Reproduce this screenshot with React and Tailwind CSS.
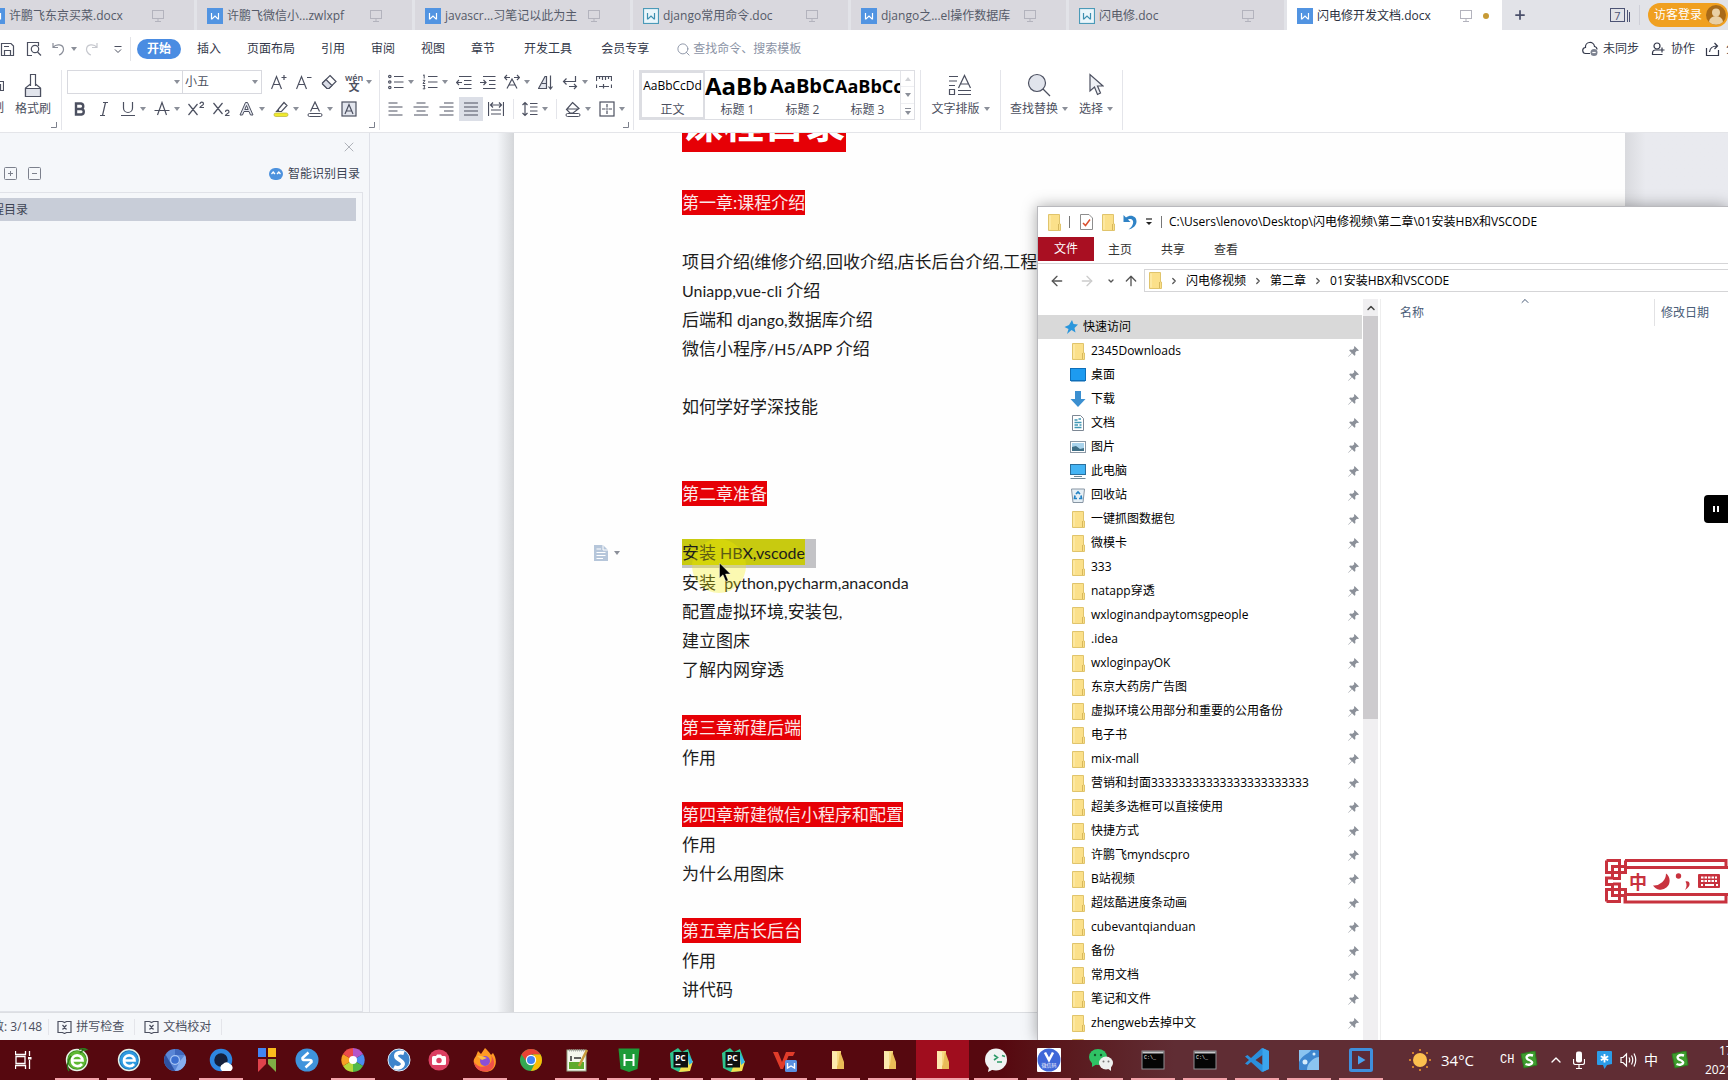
import React from "react";
import { Search, ArrowLeft, ArrowRight, ArrowUp, ChevronDown, ChevronUp, ChevronRight, Plus, X } from "lucide-react";

const UI = "font-['Open_Sans','Noto_Sans_CJK_SC',sans-serif]";

/* ---------- small shared drawings ---------- */

function Svg({ w = 16, h = 16, children, className = "", sw = 1.2 }) {
  return (
    <svg width={w} height={h} viewBox={`0 0 ${w} ${h}`} fill="none" stroke="currentColor"
      strokeWidth={sw} className={`shrink-0 ${className}`} aria-hidden="true">
      {children}
    </svg>
  );
}

function Caret({ className = "" }) {
  return (
    <svg width="6" height="4" viewBox="0 0 6 4" className={`shrink-0 ${className}`} aria-hidden="true">
      <path d="M0 0H6L3 4Z" fill="#8b8f99" />
    </svg>
  );
}

function DocIcon({ outline }) {
  return (
    <Svg className="text-[#4a86d8]">
      <rect x="0.5" y="0.5" width="15" height="15" fill={outline ? "#eaf6fb" : "#5294e2"} stroke={outline ? "#4b9ab8" : "#5294e2"} />
      <path d="M4.500 5V11H5L8 8L11 11H11.500V5" stroke={outline ? "#3c8fb0" : "#fff"} strokeWidth="1.2" />
    </Svg>
  );
}

function Monitor() {
  return (
    <Svg w={12} h={12} sw={1} className="text-[#b3b3bd]">
      <rect x="0.5" y="0.5" width="11" height="8" />
      <path d="M6 8.5V11M3 11.5H9" />
    </Svg>
  );
}

function Folder({ w = 13, h = 17 }) {
  return (
    <svg width={w} height={h} viewBox="0 0 13 17" className="shrink-0" aria-hidden="true">
      <path d="M0.5 0.5H11.5V10H12.5V16.5H0.5Z" fill="#fbe08a" stroke="#e0c46c" />
      <path d="M10.500 10V16" stroke="#d6b75c" />
      <path d="M2 1.500V15.500" stroke="#fff0b8" />
    </svg>
  );
}

/* ---------- title tabs ---------- */

const tabs = [
  { name: "许鹏飞东京买菜.docx" },
  { name: "许鹏飞微信小...zwlxpf" },
  { name: "javascr...习笔记以此为主" },
  { name: "django常用命令.doc", outline: true },
  { name: "django之...el操作数据库" },
  { name: "闪电修.doc", outline: true },
  { name: "闪电修开发文档.docx", active: true },
];

function TabBar() {
  return (
    <header className="flex h-[30px] shrink-0 items-center bg-[#e2e3e8] text-xs">
      <div className="-ml-[21px] flex h-full gap-[3px]">
        {tabs.map((t) => (
          <button key={t.name}
            className={`flex h-full w-[215px] shrink-0 items-center pt-px pl-2.5 ${t.active ? "bg-white text-[#2b3040]" : "bg-[#d9d8de] text-[#555a68]"}`}>
            <DocIcon outline={t.outline} />
            <span className="ml-1 w-[143px] whitespace-nowrap text-left leading-5">{t.name}</span>
            <Monitor />
            {t.active && <span className="ml-[11px] size-1.5 rounded-full bg-[#c79a35]" />}
          </button>
        ))}
      </div>
      <button className="ml-[11px] text-[#4a4f6a]" aria-label="新建标签"><Plus size={14} strokeWidth={3} /></button>
      <div className="flex-1" />
      <button className="mr-[9px] flex items-center text-[#4c5374]" aria-label="窗口列表">
        <span className="flex h-[14px] w-[15px] items-center justify-center border border-current text-[11px] leading-none">7</span>
        <span className="ml-0.5 h-3 w-px self-end bg-current" />
        <span className="ml-px h-2.5 w-px self-end bg-current" />
      </button>
      <span className="h-5 w-px bg-[#cfd0d8]" />
      <button className="ml-2 flex h-6 items-center gap-1 rounded-full bg-[#f0a020] pl-1.5 pr-0.5 text-white">
        访客登录
        <svg width="20" height="20" viewBox="0 0 20 20" aria-hidden="true">
          <circle cx="10" cy="10" r="10" fill="#a86a18" />
          <circle cx="10" cy="7.500" r="4" fill="#e9cfa4" />
          <path d="M3 17a7 6 0 0 1 14 0a10 10 0 0 1-14 0Z" fill="#e9cfa4" />
        </svg>
      </button>
    </header>
  );
}

/* ---------- menu row ---------- */

const menus = ["插入", "页面布局", "引用", "审阅", "视图", "章节"];

function MenuRow() {
  return (
    <nav className="flex h-[38px] shrink-0 items-center bg-white text-xs text-[#33384a]">
      <div className="flex w-[130px] shrink-0 items-center text-[#4c5060]">
        <button aria-label="保存"><Svg><path d="M1.500 2.500H11L13.500 5V14.500H1.500ZM4.500 14V9.500H10.500V14M4 5.500H9" /></Svg></button>
        <button className="ml-2.5" aria-label="打印预览"><Svg><path d="M6 14.500H1.500V1.500H12.500V5" /><circle cx="9" cy="8" r="3.700" /><path d="M11.500 11L15 14.500" /></Svg></button>
        <button className="ml-2.5 flex items-center gap-1.5 text-[#8a8e99]" aria-label="撤销">
          <Svg w={13} h={14}><path d="M1 1V5.500H6M1 5.500C4 1.500 11.500 2 11.500 7.500C11.500 10 9 12.500 7 13" /></Svg><Caret />
        </button>
        <button className="ml-2 text-[#c6c8ce]" aria-label="恢复"><Svg w={13} h={14}><path d="M12 1V5.500H7M12 5.500C9 1.500 1.500 2 1.500 7.500C1.500 10 4 12.500 6 13" /></Svg></button>
        <button className="ml-4" aria-label="更多"><Svg w={8} h={9} sw={1}><path d="M0.500 1.500H7.500M1 4.500L4 7.500L7 4.500" /></Svg></button>
      </div>
      <span className="h-6 w-px bg-[#e3e4e8]" />
      <button className="ml-1.5 h-5 rounded-full bg-[#4a8ce2] px-2.5 font-bold leading-5 text-white">开始</button>
      <div className="ml-[3px] flex">
        {menus.map((m) => <button key={m} className="px-[13px] whitespace-nowrap">{m}</button>)}
        <button className="px-4 pr-[13px] whitespace-nowrap">开发工具</button>
        <button className="px-4 whitespace-nowrap">会员专享</button>
      </div>
      <label className="ml-[11px] flex items-center gap-0.5 text-[#8b93a5]">
        <Search size={15} strokeWidth={1.5} />
        <input aria-label="查找命令" placeholder="查找命令、搜索模板" className="w-32 bg-transparent outline-none placeholder:text-[#8b93a5]" />
      </label>
      <div className="flex-1" />
      <div className="-mr-[22px] flex shrink-0 items-center">
        <button className="flex items-center gap-1 whitespace-nowrap">
          <Svg w={17} h={16}><path d="M8 12.500H4A3 3 0 0 1 3.500 6.500A4.500 4.500 0 0 1 12.500 5.500A3 3 0 0 1 15 8.500" /><circle cx="12" cy="11.500" r="3.500" fill="#7c8290" stroke="none" /><path d="M10.300 11.500H13.700" stroke="#fff" /></Svg>
          未同步
        </button>
        <button className="ml-3 flex items-center gap-1.5 whitespace-nowrap">
          <Svg w={14} h={14}><circle cx="6" cy="4" r="3" /><path d="M8.500 12.500H1.500V11C1.500 9 3 8 4.500 8H9M8.500 12.500H11.500M11 5.500V10.500M8.500 8H13.500" /></Svg>
          协作
        </button>
        <button className="ml-2.5 flex items-center gap-1.5 whitespace-nowrap">
          <Svg w={15} h={14}><path d="M1.500 6V13.500H13.500V8M4.500 10C5 6 7 4 12 4M9.500 1L12.500 4L9.500 7" /></Svg>
          分享
        </button>
      </div>
    </nav>
  );
}

/* ---------- ribbon ---------- */

function Tool({ label, drop, children, className = "" }) {
  return (
    <button aria-label={label} className={`flex shrink-0 items-center gap-1 text-[#4c5060] ${className}`}>
      {children}
      {drop && <Caret />}
    </button>
  );
}

function Corner() {
  return <Svg w={6} h={6} sw={1} className="absolute right-1 bottom-1 text-[#7c808c]"><path d="M5.500 0V5.500H0" /></Svg>;
}

const Divider = ({ className = "h-[60px]" }) => <span className={`w-px shrink-0 self-center bg-[#e4e5ea] ${className}`} />;

function FontGroup() {
  return (
    <div className="relative flex h-full w-[317px] shrink-0 flex-col gap-[3px] pt-[2px] pl-[5px]">
      <div className="flex h-6 items-center gap-[9px]">
        <div className="flex h-6 w-[195px] border border-[#d8d9df] text-xs text-[#4c5060]">
          <label className="flex w-[115px] items-center border-r border-[#d8d9df] pr-0.5">
            <input aria-label="字体" className="w-full min-w-0 bg-transparent outline-none" /><Caret />
          </label>
          <label className="flex flex-1 items-center pl-0.5 pr-[3px]">
            <input aria-label="字号" defaultValue="小五" className="w-full min-w-0 bg-transparent outline-none" /><Caret />
          </label>
        </div>
        <Tool label="增大字号"><Svg><path d="M0.500 15L5.500 2.500L10.500 15M2.500 10.500H8.500M10.500 3.500H15.500M13 1V6" /></Svg></Tool>
        <Tool label="减小字号"><Svg><path d="M0.500 15L5.500 2.500L10.500 15M2.500 10.500H8.500M11 3.500H15.500" /></Svg></Tool>
        <Tool label="清除格式"><Svg><path d="M9 1.500L15 7.500L8 14.500H6L1.500 10V9Z" /><path d="M5 5.500L11 11.500L8 14.500H6L1.500 10V9Z" fill="#d9dce6" /></Svg></Tool>
        <Tool label="拼音指南" drop>
          <span className="flex w-4 flex-col items-center text-[9px] leading-[9px] font-semibold"><span>wén</span><span className="text-[11px] leading-[9px]">文</span></span>
        </Tool>
      </div>
      <div className="flex h-6 items-center gap-2 pl-[5px]">
        <Tool label="加粗"><Svg sw={2.4}><path d="M4 2.500H9A2.800 2.800 0 0 1 9 8H4ZM4 8H9.500A2.800 2.800 0 0 1 9.500 13.500H4Z" /></Svg></Tool>
        <Tool label="倾斜"><Svg><path d="M7 1.500H12M4 14.500H9M9.500 1.500L6.500 14.500" /></Svg></Tool>
        <Tool label="下划线" drop><Svg><path d="M3.500 1V7A4.500 4.500 0 0 0 12.500 7V1M1 14.500H15" /></Svg></Tool>
        <Tool label="删除线" drop><Svg><path d="M3.500 14L8 1.500L12.500 14M0.500 9.500H15.500" /></Svg></Tool>
        <Tool label="上标"><Svg w={17}><path d="M0.500 3L9.500 14M9.500 3L0.500 14M12 3C12 0.500 15.500 0.500 15.500 3C15.500 4.500 12 5 12 6.500H16" /></Svg></Tool>
        <Tool label="下标"><Svg w={18}><path d="M0.500 2L9.500 13M9.500 2L0.500 13M12.500 11C12.500 8.500 16 8.500 16 11C16 12.500 12.500 13 12.500 14.500H16.500" /></Svg></Tool>
        <Tool label="文字效果" drop><Svg sw={1}><path d="M1 14L6.500 1.500H8.500L14 14H11.500L10 10.500H5L3.500 14ZM5.800 8.500H9.200L7.500 4.500Z" fill="#e3e6ee" /></Svg></Tool>
        <Tool label="突出显示" drop><Svg><path d="M5.500 8L11 1.500L14 4.500L8.500 10.500H5.500ZM5.500 8L3.500 10.500H6" /><rect x="1" y="12" width="14" height="3.500" rx="1.700" fill="#f0ea2e" stroke="#b8b23c" strokeWidth="0.700" /></Svg></Tool>
        <Tool label="字体颜色" drop><Svg><path d="M3.500 10.500L8 1L12.500 10.500M5 7.500H11" /><rect x="1" y="12.500" width="14" height="3" rx="1.500" strokeWidth="1" /></Svg></Tool>
        <Tool label="字符边框"><Svg><rect x="1" y="1" width="14" height="14" fill="#e3e6ee" /><path d="M4 13L8 3.500L12 13M5.500 10H10.500" /></Svg></Tool>
      </div>
      <Corner />
    </div>
  );
}

function ParagraphGroup() {
  return (
    <div className="relative flex h-full w-[253px] shrink-0 flex-col gap-[3px] pt-[2px] pl-2">
      <div className="flex h-6 items-center gap-2">
        <Tool label="项目符号" drop><Svg><path d="M6 2.500H15.500M6 8H15.500M6 13.500H15.500" /><circle cx="1.800" cy="2.500" r="1.200" /><circle cx="1.800" cy="8" r="1.200" /><circle cx="1.800" cy="13.500" r="1.200" /></Svg></Tool>
        <Tool label="编号" drop><Svg><path d="M6 2.500H15.500M6 8H15.500M6 13.500H15.500" /><path d="M1 1.500L2.200 0.800V4.500M0.800 6.300H3L1 9.500H3.200M0.800 11.500H3L2 13L3 14.800H0.800" strokeWidth="1" /></Svg></Tool>
        <Tool label="减少缩进"><Svg><path d="M3 2.500H15.500M8 6.500H15.500M8 10.500H15.500M3 14.500H15.500M0.500 8.500H6M3 6L0.500 8.500L3 11" /></Svg></Tool>
        <Tool label="增加缩进"><Svg><path d="M3 2.500H15.500M9 6.500H15.500M9 10.500H15.500M3 14.500H15.500M0 8.500H6M3.500 6L6 8.500L3.500 11" /></Svg></Tool>
        <Tool label="中文版式" drop><Svg><path d="M3 14.500L8 5L13 14.500M5 11H11M0.500 3.500H6M10 3.500H15.500M3 1L0.500 3.500L3 6M13 1L15.500 3.500L13 6" /></Svg></Tool>
        <Tool label="排序"><Svg><path d="M0.500 14.500L7 2.500H8.500V14.500ZM4 9.500H8.500" fill="#e3e6ee" /><path d="M12.500 1.500V15M10.500 12.500L12.500 15L14.500 12.500" /></Svg></Tool>
        <Tool label="段落标记" drop><Svg><path d="M13.500 2V7.500H1.500M4.500 4.500L1.500 7.500L4.500 10.500M7 12.500H14M12 10L14.500 12.500L12 15" /></Svg></Tool>
        <Tool label="标尺"><Svg><path d="M0.500 7V2.500H15.500V7M3.500 2.500V5M6.500 2.500V6M9.500 2.500V6M12.500 2.500V5M0.500 10.500V14M3 12.500H13M15.500 10.500V14M7.500 10V14.500" /></Svg></Tool>
      </div>
      <div className="flex h-6 items-center">
        <div className="flex items-center gap-[9px]">
          <Tool label="左对齐"><Svg><path d="M0.500 2H9.500M0.500 6H14.500M0.500 10H9.500M0.500 14H14.500" /></Svg></Tool>
          <Tool label="居中对齐"><Svg><path d="M3.500 2H12.500M0.500 6H15.500M3.500 10H12.500M1 14H15" /></Svg></Tool>
          <Tool label="右对齐"><Svg><path d="M6 2H15.500M1.500 6H15.500M6 10H15.500M1.500 14H15.500" /></Svg></Tool>
          <Tool label="两端对齐" className="-mx-1 h-6 bg-[#dcdfe7] px-1"><Svg><path d="M1 2H15M1 6H15M1 10H15M1 14H15" /></Svg></Tool>
          <Tool label="分散对齐"><Svg><path d="M0.500 1V15M15.500 1V15M3 4H13M5 1.500L2.500 4L5 6.500M11 1.500L13.500 4L11 6.500M3 9H13M3 13H13" /></Svg></Tool>
        </div>
        <Divider className="ml-[9px] h-5" />
        <Tool label="行距" drop className="ml-2"><Svg><path d="M3 1.500V14.500M0.500 4L3 1.500L5.500 4M0.500 12L3 14.500L5.500 12M8 2.500H15.500M8 6H15.500M8 10H15.500M8 13.500H15.500" /></Svg></Tool>
        <Divider className="ml-2 h-5" />
        <Tool label="底纹颜色" drop className="ml-2"><Svg><path d="M7.500 1.500L14 7.500L8 12H5L1.500 8.500ZM2 8H13" /><rect x="1" y="12.500" width="14" height="3" rx="1.500" strokeWidth="1" /></Svg></Tool>
        <Tool label="边框" drop className="ml-2"><Svg><rect x="1" y="1" width="14" height="14" /><path d="M8 3V6.500M8 9.500V13M3 8H6.500M9.500 8H13M7 8H9" /></Svg></Tool>
      </div>
      <Corner />
    </div>
  );
}

function StyleCell({ sample, label, size, active }) {
  return (
    <button className={`flex h-12 w-[65px] shrink-0 flex-col items-center overflow-hidden ${active ? "outline-2 -outline-offset-2 outline-[#dcdde2]" : ""}`}>
      <span className={`h-[30px] w-full overflow-hidden whitespace-nowrap text-black ${active ? "text-center" : "text-left"} ${size}`}>{sample}</span>
      <span className="text-xs leading-[17px] text-[#4c5060]">{label}</span>
    </button>
  );
}

function BigTool({ icon, label }) {
  return (
    <button className="flex flex-col items-center gap-1 text-xs leading-4 text-[#4c5060]">
      <span className="flex h-6 items-center">{icon}</span>
      <span className="flex items-center gap-1 whitespace-nowrap">{label}<Caret /></span>
    </button>
  );
}

function Ribbon() {
  return (
    <div className="flex h-[65px] shrink-0 border-b border-[#e4e5e9] bg-white">
      <div className="relative flex h-full w-[61px] shrink-0 text-xs leading-4 text-[#4c5060]">
        <button className="-ml-2 flex w-3 flex-col items-end gap-1.5 overflow-hidden pt-2.5" aria-label="复制">
          <Svg w={10} h={16}><path d="M0 3.500H9.500V12.500H0M0 6.500H6.500V12" /></Svg>
          <span>制</span>
        </button>
        <button className="ml-[11px] flex w-9 flex-col items-center gap-1 pt-[5px]">
          <Svg w={18} h={24}><path d="M6.500 13V1.500H11.500V13M6.500 11L1.500 15V23.500H16.500V15L11.500 11" /><path d="M1.500 15.500H16.500V23.500H1.500Z" fill="#e1e4ec" /></Svg>
          <span className="whitespace-nowrap">格式刷</span>
        </button>
        <Corner />
      </div>
      <Divider />
      <FontGroup />
      <Divider />
      <ParagraphGroup />
      <Divider />
      <div className="mt-[2px] ml-[5px] flex h-[50px] shrink-0 border border-[#dddee3]">
        <StyleCell sample="AaBbCcDd" label="正文" size="text-xs leading-[30px]" active />
        <StyleCell sample="AaBb" label="标题 1" size="text-2xl leading-[30px] font-bold" />
        <StyleCell sample="AaBbC" label="标题 2" size="text-xl leading-[30px] font-bold" />
        <StyleCell sample="AaBbCc" label="标题 3" size="text-lg leading-[30px] font-bold" />
        <div className="flex w-[14px] flex-col border-l border-[#e4e5e9]">
          <button className="flex flex-1 items-center justify-center" aria-label="上一行"><Caret className="rotate-180 opacity-40" /></button>
          <button className="flex flex-1 items-center justify-center border-y border-[#eeeff2]" aria-label="下一行"><Caret /></button>
          <button className="flex flex-1 flex-col items-center justify-center gap-0.5" aria-label="全部样式"><span className="h-px w-1.5 bg-[#8b8f99]" /><Caret /></button>
        </div>
      </div>
      <Divider className="ml-[5px] h-[60px]" />
      <div className="flex w-[79px] shrink-0 justify-center pt-[5px]">
        <BigTool label="文字排版" icon={<Svg w={24} h={22}><path d="M1 2.500H10M1 7H9M1 11.500H7M10.500 14L16.500 1.500L22.500 14M12.500 10H20.500M1.500 15.500H6.500V20.500H1.500ZM10 16.500H23M10 20.500H23" /></Svg>} />
      </div>
      <Divider />
      <div className="flex w-[121px] shrink-0 gap-[11px] pt-[5px] pl-[9px]">
        <BigTool label="查找替换" icon={<Svg w={24} h={24}><circle cx="10" cy="10" r="8.500" fill="#e1e4ec" /><path d="M16 16L23 23" /></Svg>} />
        <BigTool label="选择" icon={<Svg w={16} h={24}><path d="M2 1.500V18L6.500 14L9.500 21.500L12.500 20L9.500 13H15Z" fill="#eef0f5" /></Svg>} />
      </div>
      <Divider />
    </div>
  );
}

/* ---------- outline panel ---------- */

function OutlinePanel() {
  return (
    <aside className="flex w-[370px] shrink-0 flex-col border-r border-[#dfe1e8] bg-[#f5f7fa] text-xs text-[#3d4454]">
      <div className="flex h-[22px] items-end justify-end pr-3"><button aria-label="关闭" className="text-[#8b8f99]"><X size={16} strokeWidth={1} className="block" /></button></div>
      <div className="flex h-[37px] items-center">
        <button aria-label="展开" className="ml-1 text-[#7c808c]"><Svg w={13} h={13} sw={1}><rect x="0.500" y="0.500" width="12" height="12" rx="1" /><path d="M4 6.500H9M6.500 4V9" /></Svg></button>
        <button aria-label="折叠" className="ml-[11px] text-[#7c808c]"><Svg w={13} h={13} sw={1}><rect x="0.500" y="0.500" width="12" height="12" rx="1" /><path d="M4 6.500H9" /></Svg></button>
        <button className="ml-auto flex items-center gap-[5px] pr-[9px]">
          <svg width="14" height="12" viewBox="0 0 14 12" aria-hidden="true"><rect width="14" height="12" rx="6" fill="#4d92de" /><path d="M2.500 6L4.200 4L6 6M8 6L9.800 4L11.500 6" stroke="#fff" strokeWidth="1.200" fill="none" /></svg>
          智能识别目录
        </button>
      </div>
      <div className="mr-1.5 flex-1 border-t border-r border-b border-[#e0e2e8] pt-[5px] pr-1.5">
        <button className="block h-[23px] w-full overflow-hidden bg-[#c8cdd8] text-left leading-[23px]"><span className="-ml-5">课程目录</span></button>
      </div>
    </aside>
  );
}

/* ---------- document ---------- */

const lines = [
  { h: "第一章:课程介绍" }, {},
  { t: "项目介绍(维修介绍,回收介绍,店长后台介绍,工程" },
  { t: "Uniapp,vue-cli 介绍" }, { t: "后端和 django,数据库介绍" }, { t: "微信小程序/H5/APP 介绍" }, {},
  { t: "如何学好学深技能" }, {}, { gap: true },
  { h: "第二章准备" }, { gap: true },
  { sel: "安装 HBX,vscode" },
  { t: "安装  python,pycharm,anaconda" }, { t: "配置虚拟环境,安装包," }, { t: "建立图床" }, { t: "了解内网穿透" }, { gap: true },
  { h: "第三章新建后端" }, { t: "作用" }, {},
  { h: "第四章新建微信小程序和配置" }, { t: "作用" }, { t: "为什么用图床" }, {},
  { h: "第五章店长后台" }, { t: "作用" }, { t: "讲代码" },
];

/* Latin runs are set one size below the Chinese text around them. */
function Mixed({ text }) {
  return text.split(/([\x20-\x7e]+)/).map((part, i) =>
    i % 2 ? <span key={i} className="text-base leading-none">{part}</span> : part
  );
}

function SelectedLine({ text }) {
  return (
    <>
      <span className="inline-block bg-[#c3c3c6] pr-[11px] align-top">
        <span className="mb-[3px] block h-[26px] bg-[#c8ca10] leading-7"><Mixed text={text} /></span>
      </span>
      <span className="absolute top-0 left-[10px] size-[54px] rounded-full bg-[#f4f000]/30" />
      <svg width="12" height="20" viewBox="0 0 12 20" className="absolute top-6 left-[37px]" aria-hidden="true">
        <path d="M0.500 0V15L4 11.800L6.800 18.500L9.200 17.400L6.500 11H11.500Z" fill="#000" stroke="#fff" strokeWidth="0.400" />
      </svg>
      <span className="absolute top-1.5 -left-[88px] flex items-center gap-1.5">
        <svg width="14" height="16" viewBox="0 0 14 16" aria-hidden="true"><path d="M0 0H9L14 5V16H0Z" fill="#b6c6da" /><path d="M2.500 4H7M2.500 7.500H11.500M2.500 10.500H11.500M2.500 13.500H9" stroke="#fff" strokeWidth="1.200" /><path d="M9 0V5H14" stroke="#fff" fill="none" /></svg>
        <Caret />
      </span>
    </>
  );
}

function Document() {
  return (
    <main className="flex min-w-0 flex-1 overflow-hidden bg-[#f5f7fa]">
      <div className="w-[127px] shrink-0" />
      <div className="w-[17px] shrink-0 bg-linear-to-r from-[#f5f7fa] to-[#d4d6d9]" />
      <article className="flex-1 overflow-hidden bg-[#fefefe] pl-[168px] font-[Lato,'Noto_Sans_CJK_SC',sans-serif] text-[17px] text-[#1c1c1c]">
        <h1 className="-mt-10 mb-[38px] h-[59px] w-fit bg-[#e60006] text-[41px] leading-[59px] font-bold whitespace-nowrap text-white">课程目录</h1>
        {lines.map((l, i) => {
          if (l.h) return <h2 key={i} className="mt-px mb-[3px] h-[25px] w-fit bg-[#e60006] leading-[25px] whitespace-nowrap text-[#fbe9e9]">{l.h}</h2>;
          if (l.sel) return <div key={i} className="relative h-[29px] whitespace-nowrap"><SelectedLine text={l.sel} /></div>;
          if (l.t) return <p key={i} className="h-[29px] leading-[29px] whitespace-pre"><Mixed text={l.t} /></p>;
          return <p key={i} className={l.gap ? "h-[30px]" : "h-[29px]"} />;
        })}
      </article>
      <div className="w-[103px] shrink-0 bg-linear-to-r from-[#d9dade] via-[#e9eaef] via-20% to-[#e9eaef]" />
    </main>
  );
}

/* ---------- status bar ---------- */

function Book() {
  return <Svg w={15} h={14}><path d="M5.500 1.500H1V12.500H5.500L7.500 13.500L9.500 12.500H14V1.500H9.500M5.500 1.500L7.500 2.500L9.500 1.500M5.500 5L9.500 9.500M9.500 5L5.500 9.500" /></Svg>;
}

function StatusBar() {
  return (
    <footer className="flex h-7 shrink-0 items-center border-t border-[#dcdee2] bg-[#f5f7fa] text-xs text-[#4c5060]">
      <span className="-ml-2 whitespace-nowrap">数: 3/148</span>
      <Divider className="ml-1.5 h-4" />
      <button className="ml-2 flex items-center gap-1"><Book />拼写检查</button>
      <Divider className="ml-2.5 h-4" />
      <button className="ml-[9px] flex items-center gap-1"><Book />文档校对</button>
      <Divider className="ml-2.5 h-4" />
    </footer>
  );
}

/* ---------- file explorer ---------- */

const quick = [
  "2345Downloads", "桌面", "下载", "文档", "图片", "此电脑", "回收站", "一键抓图数据包", "微模卡", "333",
  "natapp穿透", "wxloginandpaytomsgpeople", ".idea", "wxloginpayOK", "东京大药房广告图",
  "虚拟环境公用部分和重要的公用备份", "电子书", "mix-mall", "营销和封面33333333333333333333333",
  "超美多选框可以直接使用", "快捷方式", "许鹏飞myndscpro", "B站视频", "超炫酷进度条动画", "cubevantqianduan",
  "备份", "常用文档", "笔记和文件", "zhengweb去掉中文", "",
];

const quickIcons = {
  桌面: <svg width="16" height="14" viewBox="0 0 16 14"><rect x="0.500" y="0.500" width="15" height="12" fill="#1d9bf0" stroke="#0f6fb8" /><path d="M1 13H15" stroke="#0f6fb8" /></svg>,
  下载: <svg width="16" height="16" viewBox="0 0 16 16"><path d="M5 0H11V8H15.500L8 16L0.500 8H5Z" fill="#3b8fd0" /></svg>,
  文档: <svg width="12" height="16" viewBox="0 0 12 16"><path d="M0.500 0.500H8.500L11.500 3.500V15.500H0.500Z" fill="#fff" stroke="#7d8794" /><path d="M2.500 5H5.500M6.500 4H9M2.500 7.500H9.500M2.500 10H6M7.500 10H9.500M2.500 12.500H9.500" stroke="#3f96b4" strokeWidth="1.300" /></svg>,
  图片: <svg width="16" height="12" viewBox="0 0 16 12"><rect x="0.500" y="0.500" width="15" height="11" fill="#fff" stroke="#8b98a5" /><rect x="2" y="2" width="12" height="8" fill="#a9d3ec" /><path d="M2 6L6 5L10 8L14 7V10H2Z" fill="#3f6f86" /></svg>,
  此电脑: <svg width="16" height="15" viewBox="0 0 16 15"><rect x="0.500" y="0.500" width="15" height="10" fill="#44b4f4" stroke="#2b6f9c" /><path d="M4 12.500H12M0.500 14.500H15.500" stroke="#6d8796" /></svg>,
  回收站: <svg width="14" height="15" viewBox="0 0 14 15"><path d="M0.500 1H13.500L12 14.500H2Z" fill="#e6eff5" stroke="#8795a3" /><path d="M5 6L7 4L9 6M10 7.500L10.500 10.500H8M4 7.500L3.500 10.500H6" stroke="#2382c4" strokeWidth="1.700" fill="none" /></svg>,
};

function Pin() {
  return (
    <svg width="11" height="11" viewBox="0 0 11 11" className="shrink-0" aria-hidden="true">
      <path d="M6.500 0L11 4.500L9.800 5L8.800 4.800L7.200 6.600L7.400 9L6.500 9.800L4 7.300L0.500 10.800L0.200 10.500L3.600 6.900L1.200 4.500L2 3.600L4.400 3.800L6.300 2.200L6 1.200Z" fill="#8b9099" />
    </svg>
  );
}

function Explorer() {
  return (
    <section className="absolute top-[206px] right-0 bottom-0 left-[1037px] flex flex-col overflow-hidden border-t border-l border-[#b9b9bd] bg-white text-xs text-black shadow-[0_0_14px_rgba(0,0,0,0.35)]">
      <div className="flex h-[30px] shrink-0 items-center pl-2.5">
        <Folder />
        <span className="ml-2 h-3 w-px bg-[#777]" />
        <svg width="13" height="16" viewBox="0 0 13 16" className="ml-2.5" aria-hidden="true"><path d="M0.500 0.500H9L12.500 4V15.500H0.500Z" fill="#fff" stroke="#8d8d8d" /><path d="M3 9L5.500 11.500L10 5.500" fill="none" stroke="#d9502e" strokeWidth="1.500" /></svg>
        <span className="ml-[9px]"><Folder /></span>
        <svg width="14" height="16" viewBox="0 0 14 16" className="ml-2" aria-hidden="true"><path d="M0.500 1V8H7.500L5 5.500C8 4 11 6 10 9.500C9.500 12 7.500 14 5.500 15.500C10 14.500 13.500 11.500 13.500 7.500C13.500 2.500 8 0 3 3.500Z" fill="#2f83c6" /></svg>
        <Svg w={8} h={8} className="ml-2 text-[#222]"><path d="M1 1H7" /><path d="M1 4H7L4 7Z" fill="currentColor" stroke="none" /></Svg>
        <span className="ml-2 h-3 w-px bg-[#777]" />
        <span className="ml-[7px] whitespace-nowrap">C:\Users\lenovo\Desktop\闪电修视频\第二章\01安装HBX和VSCODE</span>
      </div>
      <div className="flex h-[27px] shrink-0 items-start border-b border-[#d5d5d7] text-[#333]">
        <button className="h-6 w-14 bg-[#a90f22] text-white">文件</button>
        <button className="ml-3.5 h-[25px]">主页</button>
        <button className="ml-[29px] h-[25px]">共享</button>
        <button className="ml-[29px] h-[25px]">查看</button>
      </div>
      <div className="mt-[5px] flex h-[23px] shrink-0 items-center text-[#555]">
        <button className="ml-[11px]" aria-label="后退"><ArrowLeft size={16} /></button>
        <button className="ml-3.5 text-[#ccc]" aria-label="前进"><ArrowRight size={16} /></button>
        <button className="ml-3" aria-label="最近"><ChevronDown size={8} strokeWidth={4} /></button>
        <button className="ml-2" aria-label="上移"><ArrowUp size={16} /></button>
        <div className="ml-[5px] flex h-full flex-1 items-center border border-r-0 border-[#d5d5d7] pl-1 whitespace-nowrap text-black">
          <Folder />
          <ChevronRight size={10} strokeWidth={3} className="mx-[7px] text-[#555]" />
          <button>闪电修视频</button>
          <ChevronRight size={10} strokeWidth={3} className="mx-[7px] text-[#555]" />
          <button>第二章</button>
          <ChevronRight size={10} strokeWidth={3} className="mx-[7px] text-[#555]" />
          <button>01安装HBX和VSCODE</button>
        </div>
      </div>
      <div className="mt-[7px] flex min-h-0 flex-1">
        <div className="w-[325px] shrink-0 overflow-hidden pt-4">
          <button className="flex h-6 w-[324px] items-center bg-[#d9d9d9] pl-[26px]">
            <svg width="14" height="14" viewBox="0 0 14 14" aria-hidden="true"><path d="M8 0L9.500 4L14 4.500L10.500 8L11.500 12.500L7.500 10L3 14L4.500 9L0.500 7L5 5Z" fill="#2a96dc" /></svg>
            <span className="ml-[5px]">快速访问</span>
          </button>
          <ul>
            {quick.map((q, i) => (
              <li key={i} className="flex h-6 items-center pr-1">
                <span className="ml-8 flex w-4 shrink-0 justify-center">{quickIcons[q] || <Folder />}</span>
                <a href="#" className="ml-[5px] flex-1 whitespace-nowrap leading-5">{q}</a>
                <Pin />
              </li>
            ))}
          </ul>
        </div>
        <div className="flex w-[15px] shrink-0 flex-col bg-[#f0eff1]">
          <button className="flex h-[17px] items-center justify-center text-[#444]" aria-label="向上滚动"><ChevronUp size={12} strokeWidth={3} /></button>
          <div className="h-[403px] bg-[#cdcbce]" />
        </div>
        <div className="ml-0.5 flex flex-1 border-l border-[#eee] text-[#4a5d78]">
          <div className="relative flex h-[27px] w-[274px] items-center border-r border-[#e2e2e4] pl-[19px]">
            名称
            <ChevronUp size={12} strokeWidth={2} className="absolute -top-1 left-[138px]" />
          </div>
          <div className="flex h-[27px] items-center pl-1.5 whitespace-nowrap">修改日期</div>
        </div>
      </div>
    </section>
  );
}

/* ---------- floating widgets ---------- */

function ImeBar() {
  return (
    <div className="absolute top-[858px] right-0 w-[123px] text-[#c8323e]">
      <svg width="123" height="46" viewBox="0 0 123 46" fill="none" stroke="currentColor" strokeWidth="3" aria-hidden="true">
        <path d="M20 2.500H121V9M121 37V44H20V37M20 9.500H123M20 36.500H123" fill="none" />
        <path d="M1.500 2.500H14.500V14.500H7.500V8.500H20.500V2.500M1.500 2.500V14.500H9M1.500 43.500H14.500V31.500H7.500V37.500H20.500V43.500M1.500 43.500V31.500H9M7.500 14.500V20H1.500V26.500H7.500V31.500M14.500 14.500V20.500H8M14.500 31.500V26H8M20.500 9V14.500H12M20.500 37V31.500H12" />
        <path d="M61 15.500A9 9 0 1 1 48 27.500A12 12 0 0 0 61 15.500Z" fill="currentColor" stroke="none" />
        <circle cx="73.500" cy="18" r="2.700" fill="currentColor" stroke="none" />
        <path d="M80.500 23.500C85 22 87 28 80 32C82 29 82 26 80.500 23.500Z" fill="currentColor" stroke="none" />
        <rect x="93" y="16" width="22" height="14" rx="1" fill="currentColor" stroke="none" />
        <path d="M96 19.500H112M96 23H112" stroke="#fff" strokeWidth="2" strokeDasharray="2.500 1" />
        <path d="M96 27H98M100 27H109M111 27H113" stroke="#fff" strokeWidth="2" />
      </svg>
      <span className="absolute top-3 left-6 text-lg leading-6 font-bold">中</span>
    </div>
  );
}

/* ---------- taskbar ---------- */

const Ic = ({ children }) => <svg width="24" height="24" viewBox="0 0 24 24" aria-hidden="true">{children}</svg>;

function Browser({ a, b, leaf }) {
  return (
    <Ic>
      <circle cx="12" cy="12" r="10.500" fill={b} stroke="#e8f4e8" strokeWidth="1.400" />
      <circle cx="12" cy="12" r="9" fill={a} />
      <path d="M17 16C14 19.500 7 18.500 7 12.500C7 6 17 5.500 17.500 12.500H8" fill="none" stroke="#fff" strokeWidth="2.700" />
      {leaf && <path d="M4 23C1 19 3 12 6 8M14 1.500C17 0.500 20 0.500 21.500 1.500C18 2 16 3.500 15 5" fill="none" stroke="#2d7a1c" strokeWidth="1.400" />}
    </Ic>
  );
}

const PyCharm = () => (
  <Ic>
    <path d="M1 5L9 0L13 4L19 1L23 12L20 23L10 24L2 20Z" fill="#2fc48e" />
    <path d="M16 10L24 13L21 23L10 24Z" fill="#f3e04f" /><path d="M18 4L24 14L20 17Z" fill="#37b6e8" />
    <rect x="4.500" y="4" width="14.500" height="15.500" fill="#101010" />
    <text x="6" y="12.500" fontSize="8.500" fontWeight="700" fill="#fff" fontFamily="Open Sans">PC</text><path d="M6.500 16.500H11.500" stroke="#fff" strokeWidth="1.300" />
  </Ic>
);
const TaskFolder = () => <Ic><path d="M6 3H15V21H6Z" fill="#f7d983" /><path d="M14 3L18 14V21L8 21L12 17Z" fill="#e9bb57" /><path d="M6 3L11 4V21L6 21Z" fill="#fde9ae" /></Ic>;
const Cmd = () => (
  <Ic><rect x="1" y="3" width="22" height="18" fill="#050505" stroke="#8f8f93" /><path d="M1.500 4.500H22.500" stroke="#c9c9cc" strokeWidth="2" /><text x="3" y="11" fontSize="5" fill="#fff" fontFamily="Liberation Mono">C:\_</text></Ic>
);

const apps = [
  { n: "360浏览器", run: 1, i: <Browser a="#5fb934" b="#3f8c1f" leaf /> },
  { n: "IE浏览器", run: 1, i: <Browser a="#2d9ae0" b="#1b6fb4" /> },
  { n: "Chromium", i: <Ic><circle cx="12" cy="12" r="11" fill="#5a86d6" /><path d="M12 1A11 11 0 0 1 22 7H12Z" fill="#3f68bd" /><path d="M2.500 6.500L8 16L12 23A11 11 0 0 1 2.500 6.500Z" fill="#2e51a2" /><path d="M22 7A11 11 0 0 1 12 23L17 13Z" fill="#86aef0" /><circle cx="12" cy="12" r="5" fill="#a9c6f4" /><circle cx="12" cy="12" r="3.800" fill="#3b6fd0" /></Ic> },
  { n: "QQ浏览器", run: 1, i: <Ic><circle cx="12" cy="12" r="9" fill="#14203c" stroke="#2e86e0" strokeWidth="4.500" /><path d="M13 23A4 4 0 0 1 14 16A4.500 4.500 0 0 1 21 16A4 4 0 0 1 22 23Z" fill="#fff" /></Ic> },
  { n: "书签", i: <Ic><path d="M3 0H11V9H3Z" fill="#4285f4" /><path d="M13 0H21V9H13Z" fill="#fbbc1c" /><path d="M3 11H11V16L3 24Z" fill="#e0424c" /><path d="M13 11H21V24L13 16Z" fill="#7fae45" /></Ic> },
  { n: "飞鸟", i: <Ic><circle cx="12" cy="12" r="11.500" fill="#3f93dc" /><path d="M13.500 4.500L7.500 10Q7 12 9.500 12H13.500M10.500 19.500L16.500 14Q17 12 14.500 12H10.500" fill="none" stroke="#fff" strokeWidth="2.500" /></Ic> },
  { n: "极速浏览器", run: 1, i: <Ic><path d="M12 0A12 12 0 0 1 22 6L12 12Z" fill="#b455c8" /><path d="M22 6A12 12 0 0 1 22 18L12 12Z" fill="#4b8df0" /><path d="M22 18A12 12 0 0 1 12 24V12Z" fill="#52b848" /><path d="M12 24A12 12 0 0 1 2 18L12 12Z" fill="#b6d93a" /><path d="M2 18A12 12 0 0 1 2 6L12 12Z" fill="#f6a124" /><path d="M2 6A12 12 0 0 1 12 0V12Z" fill="#ec4a4a" /><circle cx="12" cy="12" r="4" fill="#fff" /></Ic> },
  { n: "搜狗浏览器", i: <Ic><circle cx="12" cy="12" r="11" fill="#3d84cc" stroke="#dcebf8" /><path d="M17 5C11 3 7 7 10 10C13 13 18 14 15 18C13 20.500 9 20 7 19" fill="none" stroke="#fff" strokeWidth="4" /></Ic> },
  { n: "截图", i: <Ic><circle cx="12" cy="12" r="10.500" fill="#dc3f62" /><rect x="5" y="8" width="14" height="9" rx="1.500" fill="#fff" /><path d="M9 8L10 6.500H14L15 8Z" fill="#fff" /><circle cx="12" cy="12.500" r="2.700" fill="#dc3f62" /></Ic> },
  { n: "Firefox", run: 1, i: <Ic><path d="M3 8L5 3L8 6L12 0C16 4 17 5 18 7L20 5C24 11 24 18 19 22C13 26 3 23 1 15C0 12 1.500 10 3 8Z" fill="#ff9a24" /><path d="M1 14C4 18 8 20 13 18C18 16 20 12 18 7C24 15 21 23 13 23.500C6 24 2 20 1 14Z" fill="#f0524a" /><circle cx="12" cy="13" r="5" fill="#8a4fd6" /><path d="M4 8C8 7 11 9 14 10L9 12Z" fill="#ffc043" /></Ic> },
  { n: "Chrome", i: <Ic><circle cx="12" cy="12" r="11" fill="#34a853" /><path d="M2.500 6.500A11 11 0 0 1 21.500 6.500H12L8 14Z" fill="#ea4335" /><path d="M21.500 6.500A11 11 0 0 1 12 23L17 13L14 6.500Z" fill="#fbbc05" /><circle cx="12" cy="12" r="5.200" fill="#fff" /><circle cx="12" cy="12" r="4" fill="#4285f4" /></Ic> },
  { n: "记事本", run: 1, i: <Ic><rect x="2" y="2" width="19" height="21" fill="#f5f7ee" stroke="#9aa88a" /><path d="M4 14H19V21H4Z" fill="#5faa2c" /><path d="M4 2.500H20" stroke="#aaa" strokeWidth="2" strokeDasharray="1 1" /><path d="M6 8V13M9 10H16" stroke="#333" strokeWidth="1.500" /><path d="M22 2L14 18" stroke="#c89c3c" strokeWidth="2.500" /></Ic> },
  { n: "HBuilder", run: 1, i: <Ic><path d="M1.500 0.500H22.500L20.500 21L12 24L3.500 21Z" fill="#1d9b38" /><path d="M7.500 6V18M16.500 6V18M7.500 12H16.500" stroke="#fff" strokeWidth="2" /></Ic> },
  { n: "PyCharm 1", run: 1, i: <PyCharm /> },
  { n: "PyCharm 2", run: 1, i: <PyCharm /> },
  { n: "WPS", run: 1, i: <Ic><path d="M0 4H5L9 14L13 4H22L20 8H15.500L10 21H7.500Z" fill="#e03c2a" /><rect x="12" y="12" width="12" height="12" rx="1.500" fill="#5a8fe0" /><path d="M14.500 15V20L18 18L21.500 20V15" fill="none" stroke="#fff" strokeWidth="1.400" /></Ic> },
  { n: "文件夹 1", run: 2, i: <TaskFolder /> },
  { n: "文件夹 2", run: 1, i: <TaskFolder /> },
  { n: "文件夹 3", run: 2, active: true, i: <TaskFolder /> },
  { n: "终端助手", run: 2, i: <Ic><circle cx="12" cy="11.500" r="11" fill="#f1f3f3" /><path d="M5 19L4 24L10 21Z" fill="#f1f3f3" /><path d="M10 7L13.500 9.500L10 12M18 7.500L21 8.500M13 14H18" fill="none" stroke="#2f9c6a" strokeWidth="1.600" /></Ic> },
  { n: "微信码", run: 2, i: <Ic><rect width="24" height="24" rx="1" fill="#fff" /><circle cx="12" cy="12" r="11.500" fill="#3f67d8" /><path d="M8 4.500L12 12L16 4.500" fill="none" stroke="#fff" strokeWidth="2.500" /><text x="4.500" y="19" fontSize="5" fill="#fff" fontFamily="Noto Sans CJK SC">微信码</text></Ic> },
  { n: "微信", run: 1, i: <Ic><ellipse cx="9" cy="9" rx="9" ry="8" fill="#2fc264" /><path d="M3 14L3 19L8 16Z" fill="#2fc264" /><circle cx="6" cy="7" r="1.200" fill="#14552b" /><circle cx="12" cy="7" r="1.200" fill="#14552b" /><ellipse cx="17" cy="15" rx="7" ry="6.500" fill="#eef0ef" /><path d="M18 20L22 23V18Z" fill="#eef0ef" /><circle cx="14.500" cy="13.500" r="1" fill="#777" /><circle cx="19.500" cy="13.500" r="1" fill="#777" /></Ic> },
  { n: "命令提示符 1", run: 1, i: <Cmd /> },
  { n: "命令提示符 2", run: 1, i: <Cmd /> },
  { n: "VS Code", run: 1, i: <Ic><path d="M17 0L24 3V21L17 24L6 14L2.500 17L0 15.500L4 12L0 8.500L2.500 7L6 10ZM17.500 7L10.500 12L17.500 17Z" fill="#2b8fdc" /><path d="M17.500 0L24 3V21L17.500 24Z" fill="#3ba5ee" /></Ic> },
  { n: "图像", run: 1, i: <Ic><rect x="2" y="2" width="20" height="20" rx="1" fill="#3f87cf" /><path d="M2 2H14C12 6 6 6 2 14ZM22 9C15 10 10 16 10 22H22Z" fill="#8bc4f0" /><circle cx="8" cy="14" r="2.500" fill="#d6ecfb" /><circle cx="17" cy="6" r="1.500" fill="#d6ecfb" /></Ic> },
  { n: "播放器", run: 1, i: <Ic><rect x="1.500" y="1.500" width="21" height="21" rx="1" fill="#5c2b38" stroke="#3f8fdc" strokeWidth="3" /><path d="M9 7.500L16.500 12L9 16.500Z" fill="#4aa3f0" /></Ic> },
];

function SogouS() {
  return <svg width="18" height="18" viewBox="0 0 18 18" aria-hidden="true"><path d="M1 3L15 0L17 14L4 17Z" fill="#3f9c2e" stroke="#2d7a20" /><path d="M13 4.500C8 3 4.500 6 8 8.500C12 10 14 12 10 13.500C8 14 6.500 13.500 5.500 13" fill="none" stroke="#fff" strokeWidth="2.400" /></svg>;
}

function Taskbar() {
  return (
    <footer className="flex h-10 shrink-0 items-stretch overflow-hidden bg-linear-to-r from-[#56080f] from-58% to-[#602d34] to-68% text-white">
      <button className="flex w-[51px] shrink-0 items-center pl-[15px]" aria-label="任务视图">
        <Svg w={17} h={18} sw={1.3}><path d="M0.500 0V3.500H10.500V0M1 5.500H10V12.500H1ZM0.500 18V14.500H10.500V18M14.500 0V5M14.500 9V18" /><path d="M13 6H16.500V8.500H13Z" fill="currentColor" stroke="none" /></Svg>
      </button>
      {apps.map((a) => (
        <button key={a.n} aria-label={a.n}
          className={`flex shrink-0 flex-col items-center justify-between pt-2 ${a.run === 2 ? "w-[53px]" : a.run ? "w-[52px]" : "w-10"} ${a.active ? "bg-[#a00d1e]" : ""}`}>
          {a.i}
          {a.run && <span className={`h-0.5 bg-[#f2a3aa] ${a.active ? "w-full" : "w-11"}`} />}
        </button>
      ))}
      <div className="flex-1" />
      <div className="flex shrink-0 items-center">
        <svg width="22" height="22" viewBox="0 0 22 22" aria-hidden="true"><circle cx="11" cy="11" r="7" fill="#fcc04e" /><g fill="#f39a2c"><circle cx="11" cy="1" r="1" /><circle cx="11" cy="21" r="1" /><circle cx="1" cy="11" r="1" /><circle cx="21" cy="11" r="1" /><circle cx="4" cy="4" r="1" /><circle cx="18" cy="4" r="1" /><circle cx="4" cy="18" r="1" /><circle cx="18" cy="18" r="1" /></g></svg>
        <span className="ml-2.5 w-[59px] text-[15px]">34°C</span>
        <span className="w-5 font-['Liberation_Mono',monospace] text-xs">CH</span>
        <SogouS />
        <button className="ml-2.5" aria-label="显示隐藏图标"><ChevronUp size={16} /></button>
        <Svg w={12} h={18} className="ml-[9px]"><rect x="3" y="0.500" width="6" height="11" rx="2" fill="currentColor" stroke="none" /><path d="M0.500 8V11.500A2 2 0 0 0 2.500 13.500H9.500A2 2 0 0 0 11.500 11.500V8M6 13.500V17M3 17.500H9" /></Svg>
        <svg width="15" height="18" viewBox="0 0 15 18" className="ml-3" aria-hidden="true"><path d="M1 0H14Q15 0 15 1V13L10 14L7.500 18L6 14H1Q0 14 0 13V1Q0 0 1 0Z" fill="#2b9ce8" /><path d="M7.500 3V11.500M3.800 5.200L11.200 9.300M11.200 5.200L3.800 9.300" stroke="#fff" strokeWidth="1.800" /></svg>
        <Svg w={17} h={16} className="ml-2"><path d="M1 5.500H3L6.500 2V14L3 10.500H1ZM9 5.500Q10.500 8 9 10.500M11.500 3.500Q14 8 11.500 12.500M14 1.500Q17.500 8 14 14.500" /></Svg>
        <span className="ml-[7px] text-sm leading-5">中</span>
        <span className="ml-[13px]"><SogouS /></span>
      </div>
      <div className="flex w-[39px] shrink-0 flex-col items-start justify-center gap-px pl-4 text-xs leading-[18px] whitespace-nowrap">
        <span className="pl-3.5">17:05</span>
        <span>2021/7/20</span>
      </div>
    </footer>
  );
}

export default function App() {
  return (
    <div className={`flex h-screen flex-col overflow-hidden ${UI}`}>
      <div className="relative flex min-h-0 flex-1 flex-col overflow-hidden">
        <TabBar />
        <MenuRow />
        <Ribbon />
        <div className="flex min-h-0 flex-1"><OutlinePanel /><Document /></div>
        <StatusBar />
        <Explorer />
        <button aria-label="暂停" className="absolute top-[495px] right-0 flex h-7 w-6 items-center justify-center gap-0.5 rounded-l-sm bg-black">
          <span className="h-1.5 w-0.5 bg-white" /><span className="h-1.5 w-0.5 bg-white" />
        </button>
        <ImeBar />
      </div>
      <Taskbar />
    </div>
  );
}
